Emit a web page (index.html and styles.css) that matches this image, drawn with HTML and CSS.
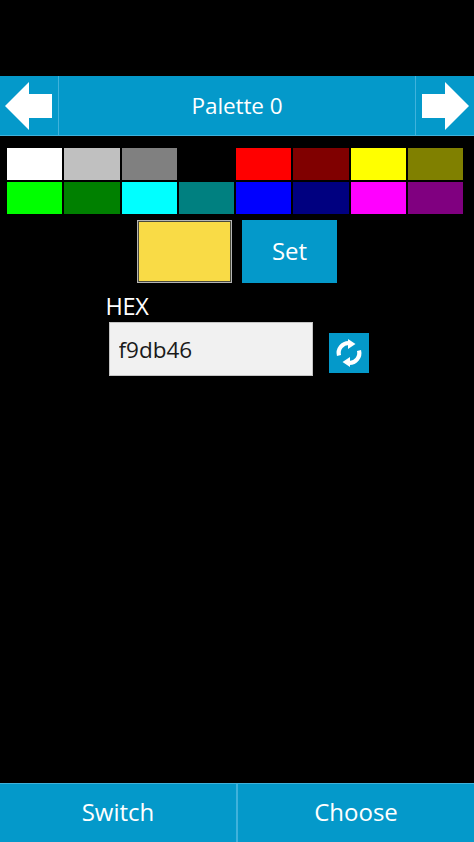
FILE: index.html
```html
<!DOCTYPE html>
<html lang="en">
  <head>
    <meta charset="UTF-8" />
    <meta name="viewport" content="width=device-width, initial-scale=1.0" />
    <title>Palette</title>
    <link rel="stylesheet" href="styles.css">
  </head>
  <body>
    <div class="screen">
      <div class="top-bar">
        <button class="arrow-button">
          <svg width="47" height="48" viewBox="0 0 47 48"><path d="M0 24 L24 0 V12 H47 V36 H24 V48 Z" fill="#fff"/></svg>
        </button>
        <div class="title">Palette 0</div>
        <button class="arrow-button">
          <svg width="47" height="48" viewBox="0 0 47 48"><path d="M47 24 L23 0 V12 H0 V36 H23 V48 Z" fill="#fff"/></svg>
        </button>
      </div>

      <div class="swatches">
        <div class="swatch white"></div>
        <div class="swatch silver"></div>
        <div class="swatch gray"></div>
        <div class="swatch black"></div>
        <div class="swatch red"></div>
        <div class="swatch maroon"></div>
        <div class="swatch yellow"></div>
        <div class="swatch olive"></div>
        <div class="swatch lime"></div>
        <div class="swatch green"></div>
        <div class="swatch aqua"></div>
        <div class="swatch teal"></div>
        <div class="swatch blue"></div>
        <div class="swatch navy"></div>
        <div class="swatch fuchsia"></div>
        <div class="swatch purple"></div>
      </div>

      <div class="set-row">
        <div class="preview"></div>
        <button class="set-button">Set</button>
      </div>

      <div class="hex-block">
        <label class="hex-label" for="hex">HEX</label>
        <div class="hex-row">
          <input class="hex-input" id="hex" type="text" value="f9db46" />
          <button class="refresh-button">
            <svg width="28" height="28" viewBox="0 0 28 28">
              <path d="M4 16.5 A10 10 0 0 1 14 4" fill="none" stroke="#fff" stroke-width="4.2"/>
              <path d="M13 0 L20.5 5 L13 10 Z" fill="#fff"/>
              <path d="M24 11.5 A10 10 0 0 1 14 24" fill="none" stroke="#fff" stroke-width="4.2"/>
              <path d="M15 28 L7.5 23 L15 18 Z" fill="#fff"/>
            </svg>
          </button>
        </div>
      </div>

      <div class="bottom-bar">
        <button class="bottom-button">Switch</button>
        <button class="bottom-button">Choose</button>
      </div>
    </div>
  </body>
</html>
```

FILE: styles.css
```css
body {
  font-family: "Open Sans", "Noto Sans", sans-serif;
  background-color: #000;
  color: #fff;
  margin: 0;
  padding: 0;
}
button {
  font-family: inherit;
  color: #fff;
  border: none;
  padding: 0;
  background-color: #0499ca;
}
.screen {
  height: 842px;
  padding-top: 76px;
  box-sizing: border-box;
  display: flex;
  flex-direction: column;
  overflow: hidden;
}
.top-bar {
  height: 60px;
  box-sizing: border-box;
  display: flex;
  background-color: #0499ca;
  border-bottom: 1px solid #3fb2dc;
}
.arrow-button {
  width: 59px;
  display: flex;
  align-items: center;
  justify-content: center;
}
.arrow-button:first-child {
  padding-right: 1px;
  border-right: 1px solid #3fb2dc;
}
.arrow-button:last-child {
  border-left: 1px solid #3fb2dc;
}
.title {
  flex: 1;
  text-align: center;
  font-size: 22.5px;
  line-height: 59px;
  letter-spacing: -0.1px;
}
.swatches {
  display: grid;
  grid-template-columns: repeat(8, 1fr);
  grid-auto-rows: 32px;
  gap: 2px;
  margin: 12px 11px 0 7px;
}
.white { background-color: #fff; }
.silver { background-color: #c0c0c0; }
.gray { background-color: #808080; }
.black { background-color: #000; }
.red { background-color: #f00; }
.maroon { background-color: #800000; }
.yellow { background-color: #ff0; }
.olive { background-color: #808000; }
.lime { background-color: #0f0; }
.green { background-color: #008000; }
.aqua { background-color: #0ff; }
.teal { background-color: #008080; }
.blue { background-color: #00f; }
.navy { background-color: #000080; }
.fuchsia { background-color: #f0f; }
.purple { background-color: #800080; }
.set-row {
  display: flex;
  justify-content: center;
  gap: 10px;
  margin-top: 6px;
}
.preview {
  width: 95px;
  height: 63px;
  box-sizing: border-box;
  background-color: #f9db46;
  border: 1px solid #b5b5b5;
  outline: 1px solid #4a4a3a;
  outline-offset: -2px;
}
.set-button {
  width: 95px;
  height: 63px;
  padding-bottom: 3px;
  font-size: 24px;
}
.hex-block {
  margin: 8px 0 0 105.5px;
}
.hex-label {
  display: block;
  font-size: 23.5px;
  line-height: 31px;
  letter-spacing: -0.3px;
}
.hex-row {
  display: flex;
  align-items: flex-start;
  gap: 16px;
  margin-left: 3px;
}
.hex-input {
  width: 204px;
  height: 54px;
  box-sizing: border-box;
  padding: 0 9px;
  font-family: inherit;
  font-size: 22.5px;
  color: #1a1a1a;
  background-color: #f1f1f1;
  border: 1px solid #c4c4c4;
  border-radius: 0;
}
.refresh-button {
  width: 40px;
  height: 40px;
  margin-top: 11px;
  display: flex;
  align-items: center;
  justify-content: center;
}
.bottom-bar {
  margin-top: auto;
  height: 59px;
  display: flex;
  background-color: #0499ca;
  border-top: 1px solid #3fb2dc;
  box-sizing: border-box;
}
.bottom-button {
  flex: 1;
  padding-bottom: 4px;
  font-size: 24px;
}
.bottom-button:first-child {
  border-right: 2px solid #3fb2dc;
}
```
